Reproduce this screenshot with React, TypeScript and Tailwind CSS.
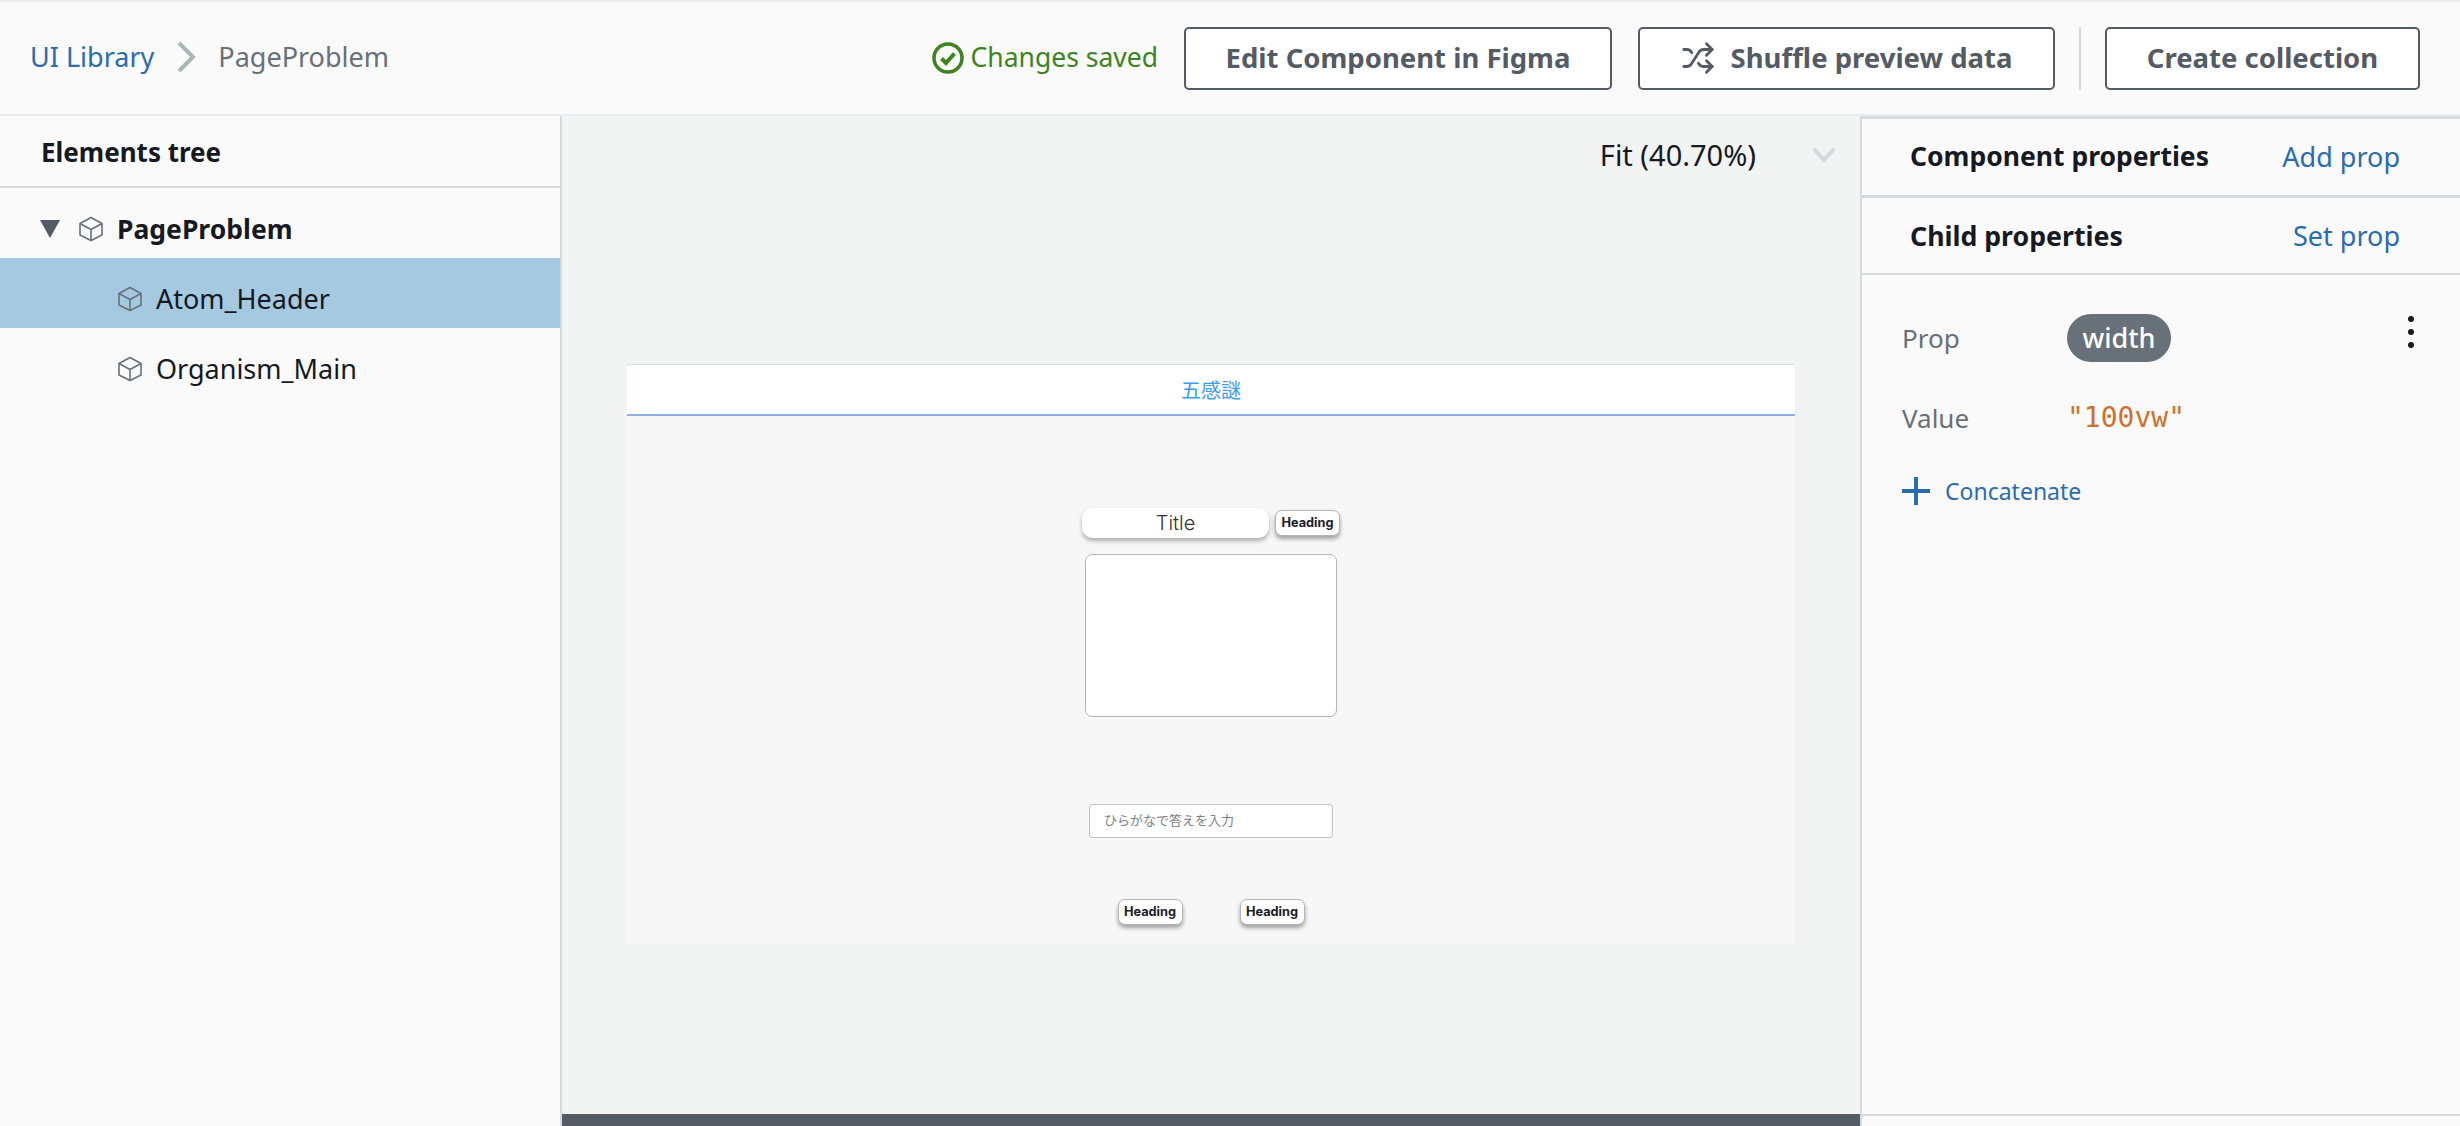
import { Shuffle } from 'lucide-react';

const ui = "font-['Noto_Sans',sans-serif]";

function CubeIcon() {
  return (
    <svg width="26" height="26" viewBox="0 0 26 26" fill="none" stroke="#687078" strokeWidth="1.6" strokeLinejoin="round" className="shrink-0">
      <path d="M13 1.5 24 7.5V19L13 24.5 2 19V7.5Z" />
      <path d="M2 7.5 13 13.5 24 7.5M13 13.5V24.5" />
    </svg>
  );
}

function OutlineButton({ children, width }: { children: React.ReactNode; width: string }) {
  return (
    <button className={`flex h-[63px] items-center justify-center gap-4 rounded-[5px] border-2 border-[#545b64] bg-white text-[27.5px] font-bold text-[#545b64] ${width}`}>
      {children}
    </button>
  );
}

function PreviewButton() {
  return (
    <div className="flex h-[26px] w-[65px] items-center justify-center rounded-[7px] border border-[#b5b5b5] bg-white font-['Inter',sans-serif] text-[12.75px] font-bold text-[#1a202c] shadow-[0_3px_4px_rgba(0,0,0,0.35)]">
      Heading
    </div>
  );
}

function TopBar() {
  return (
    <header className="flex h-[116px] shrink-0 items-center justify-between border-t-2 border-b-2 border-t-[#eeeeee] border-b-[#eaeded] bg-[#fafafa] pr-10 pl-[30px]">
      <div className="flex items-center pb-0.5 text-[27px]">
        <span className="text-[#2b6cb0]">UI Library</span>
        <svg width="20" height="32" viewBox="0 0 20 32" fill="none" stroke="#aab7b8" strokeWidth="4" className="mr-[22px] ml-[22px]">
          <path d="M3 2 17 16 3 30" />
        </svg>
        <span className="text-[#687078]">PageProblem</span>
      </div>
      <div className="flex items-center">
        <svg width="32" height="32" viewBox="0 0 32 32" fill="none" stroke="#3b841f" strokeWidth="3.5" className="mr-[7px]">
          <circle cx="16" cy="16" r="14" />
          <path d="M9.5 16.5 14 21 22.5 11.5" strokeWidth="4" />
        </svg>
        <span className="mr-[26px] text-[26.5px] text-[#3b841f]">Changes saved</span>
        <OutlineButton width="w-[428px]">Edit Component in Figma</OutlineButton>
        <div className="ml-[26px]">
          <OutlineButton width="w-[417px]">
            <Shuffle size={34} strokeWidth={2} />
            Shuffle preview data
          </OutlineButton>
        </div>
        <div className="mx-6 h-[63px] w-0.5 bg-[#d5dbdb]" />
        <OutlineButton width="w-[315px]">Create collection</OutlineButton>
      </div>
    </header>
  );
}

function TreeRow({ indent, selected, children }: { indent: string; selected?: boolean; children: React.ReactNode }) {
  return (
    <div className={`flex h-[70px] items-center pt-3 text-[27px] text-[#16191f] ${indent} ${selected ? 'bg-[#a4c9e1]' : ''}`}>
      {children}
    </div>
  );
}

function ElementsTree() {
  return (
    <aside className="flex w-[562px] shrink-0 flex-col border-r-2 border-[#d5dbdb] bg-[#fafafa]">
      <div className="flex h-[72px] shrink-0 items-center border-b-2 border-[#d5dbdb] pt-0.5 pl-[41px] text-[26px] font-bold text-[#16191f]">
        Elements tree
      </div>
      <TreeRow indent="pl-[40px]">
        <svg width="20" height="18" viewBox="0 0 20 18" fill="#545b64" className="mr-[18px] shrink-0">
          <path d="M0 0H20L10 18Z" />
        </svg>
        <CubeIcon />
        <span className="mt-0.5 ml-[13px] text-[26.5px] font-bold">PageProblem</span>
      </TreeRow>
      <TreeRow indent="pl-[117px]" selected>
        <CubeIcon />
        <span className="ml-[13px]">Atom_Header</span>
      </TreeRow>
      <TreeRow indent="pl-[117px]">
        <CubeIcon />
        <span className="ml-[13px]">Organism_Main</span>
      </TreeRow>
    </aside>
  );
}

function PreviewCanvas() {
  return (
    <div className="mx-[65px] flex h-[580px] flex-col bg-[#f7f7f7]">
      <div className="flex h-[52px] shrink-0 items-center justify-center border-t border-b-2 border-t-[#d5dde5] border-b-[#8fb3e0] bg-white font-['Noto_Sans_CJK_JP',sans-serif] text-[20px] text-[#3b9cf5]">
        五感謎
      </div>
      <div className="flex flex-col items-center pt-[92px]">
        <div className="flex items-center gap-1.5">
          <div className="flex h-[30px] w-[187px] items-center justify-center rounded-[11px] bg-white font-['Inter',sans-serif] text-[20px] font-light text-[#333333] shadow-[0_3px_4px_rgba(0,0,0,0.3)]">
            Title
          </div>
          <PreviewButton />
        </div>
        <div className="mt-4 h-[163px] w-[252px] rounded-[7px] border border-[#b5b5b5] bg-white" />
        <div className="mt-[87px] flex h-[34px] w-[244px] items-center rounded-[3px] border border-[#c2c2c2] bg-white pl-[14px] font-['Inter','Noto_Sans_CJK_JP',sans-serif] text-[13px] text-[#808080]">
          ひらがなで答えを入力
        </div>
        <div className="mt-[61px] flex gap-[57px]">
          <PreviewButton />
          <PreviewButton />
        </div>
      </div>
    </div>
  );
}

function Stage() {
  return (
    <main className="flex w-[1298px] shrink-0 flex-col bg-[#f2f3f3]">
      <div className="flex h-[71px] shrink-0 items-center justify-end pt-1.5 pr-6 text-[29px] text-[#16191f]">
        <span className="mr-[56px]">Fit (40.70%)</span>
        <svg width="24" height="16" viewBox="0 0 24 16" fill="none" stroke="#d5dbdb" strokeWidth="4">
          <path d="M2 2 12 13 22 2" />
        </svg>
      </div>
      <div className="mt-[177px]">
        <PreviewCanvas />
      </div>
      <div className="mt-auto h-3 bg-[#545b64]" />
    </main>
  );
}

function PropertiesPanel() {
  return (
    <aside className="flex flex-1 flex-col bg-[#fafafa]">
      <div className="flex h-[82px] shrink-0 items-center justify-between border-t-[3px] border-b-[3px] border-[#d5dbdb] pr-[60px] pl-12">
        <span className="text-[26.5px] font-bold text-[#16191f]">Component properties</span>
        <span className="text-[27px] text-[#2b6cb0]">Add prop</span>
      </div>
      <div className="flex h-[77px] shrink-0 items-center justify-between border-b-2 border-[#d5dbdb] pt-0.5 pr-[60px] pl-12">
        <span className="text-[26.7px] font-bold text-[#16191f]">Child properties</span>
        <span className="text-[27px] text-[#2b6cb0]">Set prop</span>
      </div>
      <div className="mt-[39px] flex h-12 items-center pr-[46px] pl-10">
        <span className="w-[165px] text-[26px] text-[#687078]">Prop</span>
        <span className="flex h-12 w-[104px] items-center justify-center rounded-3xl bg-[#687078] text-[27px] font-medium text-white">width</span>
        <div className="mt-0.5 ml-auto flex flex-col gap-[7px] self-start">
          <span className="size-1.5 rounded-full bg-[#16191f]" />
          <span className="size-1.5 rounded-full bg-[#16191f]" />
          <span className="size-1.5 rounded-full bg-[#16191f]" />
        </div>
      </div>
      <div className="mt-8 flex h-12 items-center pl-10">
        <span className="w-[165px] text-[26px] text-[#687078]">Value</span>
        <span className="font-['DejaVu_Sans_Mono',monospace] text-[28px] text-[#d0702a]">"100vw"</span>
      </div>
      <div className="mt-8 flex items-center pl-10 text-[#2b6cb0]">
        <svg width="28" height="28" viewBox="0 0 28 28" fill="none" stroke="#2b6cb0" strokeWidth="4">
          <path d="M14 0V28M0 14H28" />
        </svg>
        <span className="ml-[15px] text-[23px]">Concatenate</span>
      </div>
      <div className="mt-auto mb-2.5 h-0.5 bg-[#d5dbdb]" />
    </aside>
  );
}

export default function App() {
  return (
    <div className={`flex h-[1126px] w-[2460px] flex-col overflow-hidden bg-[#fafafa] ${ui}`}>
      <TopBar />
      <div className="flex min-h-0 flex-1">
        <ElementsTree />
        <Stage />
        <div className="w-0.5 shrink-0 bg-[#d5dbdb]" />
        <PropertiesPanel />
      </div>
    </div>
  );
}
